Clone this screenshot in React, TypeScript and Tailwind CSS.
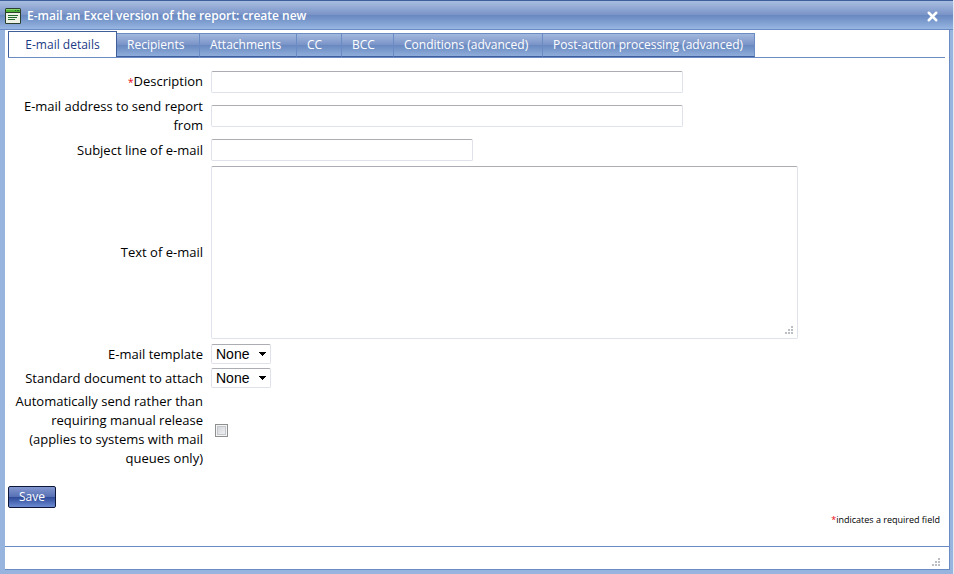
import { X } from "lucide-react";

const tabs = [
  { label: "E-mail details", width: "w-[109px]" },
  { label: "Recipients", width: "w-[83px]" },
  { label: "Attachments", width: "w-[97px]" },
  { label: "CC", width: "w-[45px]" },
  { label: "BCC", width: "w-[52px]" },
  { label: "Conditions (advanced)", width: "w-[149px]" },
  { label: "Post-action processing (advanced)", width: "w-[212px]" },
];

const fieldBorder =
  "rounded-xs border border-[#dfe2ea] border-t-[#abadb3] bg-white outline-none";

export default function App() {
  return (
    <div className="flex min-h-screen flex-col border-r border-[#e4e8f0] bg-[#97b4de] font-['Open_Sans','Noto_Sans',sans-serif] text-xs text-black">
      <TitleBar title="E-mail an Excel version of the report: create new" />
      <div className="mr-[3px] mb-1 ml-[5px] flex grow flex-col border-r border-b border-[#6a8bc4] bg-white">
        <TabBar />
        <form className="flex grow flex-col pt-[13px] pr-[9px] pl-[3px]">
          <div className="grid grid-cols-[195px_1fr] items-center gap-x-2 gap-y-1">
            <FieldLabel htmlFor="description" required>
              Description
            </FieldLabel>
            <input id="description" className={`h-[22px] w-full max-w-[472px] px-1 ${fieldBorder}`} />

            <FieldLabel htmlFor="from">E-mail address to send report from</FieldLabel>
            <input id="from" className={`h-[22px] w-full max-w-[472px] px-1 ${fieldBorder}`} />

            <FieldLabel htmlFor="subject">Subject line of e-mail</FieldLabel>
            <input id="subject" className={`h-[22px] w-full max-w-[262px] px-1 ${fieldBorder}`} />

            <FieldLabel htmlFor="body">Text of e-mail</FieldLabel>
            <div className="relative w-full max-w-[587px] py-px">
              <textarea id="body" className={`block h-[173px] w-full resize-none p-1 ${fieldBorder}`} />
              <Grip className="absolute right-[5px] bottom-1.5" />
            </div>

            <FieldLabel htmlFor="template">E-mail template</FieldLabel>
            <NoneSelect id="template" />

            <FieldLabel htmlFor="document">Standard document to attach</FieldLabel>
            <NoneSelect id="document" />

            <FieldLabel htmlFor="auto">
              Automatically send rather than requiring manual release (applies to systems with mail
              queues only)
            </FieldLabel>
            <input
              id="auto"
              type="checkbox"
              className="ml-1 size-[13px] appearance-none border border-[#8e8f8f] bg-linear-to-br from-[#cbcfd5] to-[#f6f6f6] shadow-[inset_0_0_0_1px_#f4f4f4,inset_0_0_0_2px_#c4c7cc]"
            />
          </div>
          <button
            type="button"
            className="mt-[18px] h-[22px] w-12 rounded-xs border border-[#0c1638] bg-[linear-gradient(#8497d0,#5871b5_48%,#2f4b9a_52%,#6c8bd2)] text-white"
          >
            Save
          </button>
          <p className="mt-1 text-right text-[9px] leading-4">
            <span className="text-red-600">*</span>indicates a required field
          </p>
        </form>
        <div className="flex h-[23px] items-end justify-end border-t border-[#6a8bc4] pr-[9px] pb-[3px]">
          <Grip />
        </div>
      </div>
    </div>
  );
}

const TitleBar = ({ title }: { title: string }) => (
  <header className="flex h-[30px] items-center border-t border-b border-t-[#3f5f9c] border-b-[#6a8bc4] bg-[linear-gradient(#a8bde0,#7a94c8_49%,#6888c0_51%,#97b6e2)] pt-0.5 pr-[13px] pl-[5px]">
    <WindowIcon />
    <h1 className="ml-1.5 grow font-semibold text-white">{title}</h1>
    <button type="button" aria-label="Close" className="text-white">
      <X size={15} strokeWidth={4} />
    </button>
  </header>
);

const TabBar = () => (
  <nav className="mr-1 ml-[3px] flex items-end border-b border-[#6a8bc4] pt-px">
    {tabs.map(({ label, width }, index) =>
      index === 0 ? (
        <button
          key={label}
          type="button"
          className={`h-[26px] border border-b-0 border-[#3f5f9c] bg-white text-center whitespace-nowrap text-[#1b3a85] ${width}`}
        >
          {label}
        </button>
      ) : (
        <button
          key={label}
          type="button"
          className={`h-6 border-t border-r border-b border-[#6a8bc4] border-b-[#3f5f9c] bg-[linear-gradient(#a3b8dd,#7a94c8_49%,#6888c0_51%,#8fadda)] pl-2.5 text-left whitespace-nowrap text-white ${width}`}
        >
          {label}
        </button>
      ),
    )}
  </nav>
);

type FieldLabelProps = {
  htmlFor: string;
  required?: boolean;
  children: React.ReactNode;
};

const FieldLabel = ({ htmlFor, required, children }: FieldLabelProps) => (
  <label htmlFor={htmlFor} className="pl-1 text-right text-[13px] leading-[19px]">
    {required && <span className="text-[10px] text-red-600">*</span>}
    {children}
  </label>
);

const NoneSelect = ({ id }: { id: string }) => (
  <div className="relative w-[60px]">
    <select
      id={id}
      className={`block h-5 w-full appearance-none pl-1 font-['Liberation_Sans',sans-serif] text-sm leading-4 ${fieldBorder}`}
    >
      <option>None</option>
    </select>
    <svg className="pointer-events-none absolute top-2 right-[5px]" width="7" height="4" viewBox="0 0 7 4" shapeRendering="crispEdges">
      <path d="M0 0h7v1H0zM1 1h5v1H1zM2 2h3v1H2zM3 3h1v1H3z" />
    </svg>
  </div>
);

const Grip = ({ className }: { className?: string }) => (
  <svg className={className} width="8" height="8" viewBox="0 0 8 8" fill="#bcbec6" shapeRendering="crispEdges">
    <path d="M6 0h2v2h-2zM3 3h2v2h-2zM6 3h2v2h-2zM0 6h2v2h-2zM3 6h2v2h-2zM6 6h2v2h-2z" />
  </svg>
);

const WindowIcon = () => (
  <svg width="16" height="16" viewBox="0 0 16 16">
    <rect width="16" height="16" rx="1.5" fill="#2a3f2c" />
    <rect x="1" y="1" width="14" height="3" fill="#4cb034" />
    <rect x="1" y="1" width="14" height="1" fill="#8ad66c" />
    <path d="M10 2h1v1h-1zM12 2h2v1h-2z" fill="#1f6a2c" />
    <rect x="1" y="5" width="14" height="10" fill="#eef3e6" />
    <path d="M3 7h10v1H3zM3 9h9v1H3zM3 11h7v1H3z" fill="#1f6a2c" />
  </svg>
);
